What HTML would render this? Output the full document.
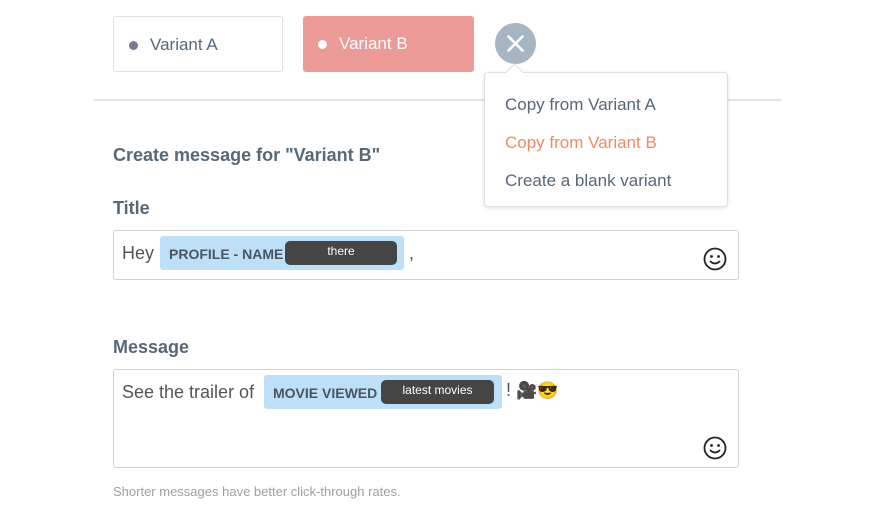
<!DOCTYPE html>
<html><head><style>
*{margin:0;padding:0;box-sizing:border-box}
body{width:877px;height:512px;background:#fff;font-family:"Liberation Sans",sans-serif;position:relative;overflow:hidden;color:#4f5f6f}
.abs{position:absolute}
.var{position:absolute;top:16px;height:56px;border-radius:3px;font-size:17px;line-height:56px;padding-left:36px}
.dot{position:absolute;left:15px;top:24px;width:9px;height:9px;border-radius:50%}
.inp{position:absolute;left:113px;width:626px;border:1px solid #cfd3d8;border-radius:3px}
.chip{position:absolute;background:#bde0f8;border-radius:3px;height:34px;font-weight:bold;font-size:14px;color:#4a5560;line-height:36px;padding-left:9px}
.dark{position:absolute;background:#454545;color:#fff;border-radius:5px;font-size:12px;font-weight:normal;text-align:center;line-height:20px;height:24px;top:5px}
.smile{position:absolute;left:703px;width:24px;height:24px}
</style></head><body>
<div class="var" style="left:113px;width:170px;border:1px solid #dde1e5;color:#56677a"><span class="dot" style="background:#767a93"></span>Variant A</div>
<div class="var" style="left:303px;width:171px;background:#ec9a98;color:#fff"><span class="dot" style="background:#fff"></span>Variant B</div>
<div class="abs" style="left:495px;top:23px;width:41px;height:41px;border-radius:50%;background:#a5b5c4">
<svg width="41" height="41"><path d="M13.5 13.5L27.5 27.5M27.5 13.5L13.5 27.5" stroke="#fff" stroke-width="2.6" stroke-linecap="round"/></svg></div>
<div class="abs" style="left:94px;top:99px;width:687px;height:2px;background:#dfe3e7"></div>
<div class="abs" style="left:484px;top:72px;width:244px;height:135px;background:#fff;border:1px solid #dcdfe3;border-radius:4px;box-shadow:0 1px 4px rgba(0,0,0,.12)"></div>
<div class="abs" style="left:508px;top:66px;width:13px;height:13px;background:#fff;border-left:1px solid #dcdfe3;border-top:1px solid #dcdfe3;transform:rotate(45deg)"></div>
<div class="abs" style="left:505px;top:95px;font-size:17px;color:#56677a">Copy from Variant A</div>
<div class="abs" style="left:505px;top:133px;font-size:17px;color:#f08a66">Copy from Variant B</div>
<div class="abs" style="left:505px;top:171px;font-size:17px;color:#56677a">Create a blank variant</div>
<div class="abs" style="left:113px;top:145px;font-size:18px;font-weight:bold;color:#56697a">Create message for "Variant B"</div>
<div class="abs" style="left:113px;top:198px;font-size:18px;font-weight:bold;color:#56697a">Title</div>
<div class="inp" style="top:230px;height:50px"></div>
<div class="abs" style="left:122px;top:243px;font-size:18px;color:#555">Hey</div>
<div class="chip" style="left:160px;top:236px;width:244px">PROFILE - NAME<div class="dark" style="left:125px;width:112px">there</div></div>
<div class="abs" style="left:409px;top:243px;font-size:18px;color:#555">,</div>
<svg class="smile" style="top:247px" viewBox="0 0 24 24"><circle cx="12" cy="12" r="10.5" fill="none" stroke="#222" stroke-width="1.8"/><circle cx="8.5" cy="9.5" r="1.4" fill="#222"/><circle cx="15.5" cy="9.5" r="1.4" fill="#222"/><path d="M7 14q5 5 10 0" fill="none" stroke="#222" stroke-width="1.8"/></svg>
<div class="abs" style="left:113px;top:337px;font-size:18px;font-weight:bold;color:#56697a">Message</div>
<div class="inp" style="top:369px;height:99px"></div>
<div class="abs" style="left:122px;top:382px;font-size:18px;color:#555">See the trailer of</div>
<div class="chip" style="left:264px;top:375px;width:238px">MOVIE VIEWED<div class="dark" style="left:117px;width:113px">latest movies</div></div>
<div class="abs" style="left:506px;top:380px;font-size:18px;color:#555">! <span style="font-size:17px">🎥😎</span></div>
<svg class="smile" style="top:436px" viewBox="0 0 24 24"><circle cx="12" cy="12" r="10.5" fill="none" stroke="#222" stroke-width="1.8"/><circle cx="8.5" cy="9.5" r="1.4" fill="#222"/><circle cx="15.5" cy="9.5" r="1.4" fill="#222"/><path d="M7 14q5 5 10 0" fill="none" stroke="#222" stroke-width="1.8"/></svg>
<div class="abs" style="left:113px;top:484px;font-size:13px;color:#9aa0a6">Shorter messages have better click-through rates.</div>
</body></html>
